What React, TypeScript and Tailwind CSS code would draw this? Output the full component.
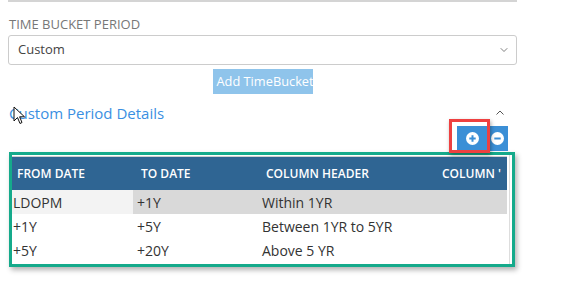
import { ChevronDown } from "lucide-react";

const rows = [
  { from: "LDOPM", to: "+1Y", header: "Within 1YR", selected: true },
  { from: "+1Y", to: "+5Y", header: "Between 1YR to 5YR", selected: false },
  { from: "+5Y", to: "+20Y", header: "Above 5 YR", selected: false },
];

const App = () => {
  return (
    <div className="relative w-[567px] h-[293px] overflow-hidden bg-white font-['Open_Sans',sans-serif] text-[#333]">
      {/* previous field edge */}
      <div className="ml-2 w-[509px] h-[2px] bg-[#d4d4d4]" />

      <div className="ml-2 w-[509px] pt-[13px]">
        <div className="pl-[1px] text-[13px] leading-[18px] text-[#777]">TIME BUCKET PERIOD</div>

        <div className="mt-[2px] flex h-[30px] items-center justify-between rounded-[3px] border border-[#ccc] pl-[9px] pr-[6px]">
          <span className="text-[13px] text-[#444]">Custom</span>
          <ChevronDown size={12} strokeWidth={1.5} className="text-[#555]" />
        </div>

        <div className="mt-[4px] flex justify-center">
          <button className="h-[25px] w-[100px] overflow-hidden whitespace-nowrap bg-[#8fc4eb] pl-[4px] text-left text-[12.8px] text-white">
            Add TimeBucket
          </button>
        </div>

        {/* Section heading */}
        <div className="mt-[9px] flex items-start justify-between pl-[1px] pr-[13px]">
          <span className="text-[15px] leading-[20px] text-[#3a8fe2]">Custom Period Details</span>
          <svg width="8" height="5" viewBox="0 0 8 5" className="mt-[7px]">
            <path d="M0.5 4.5 L4 1 L7.5 4.5" fill="none" stroke="#555" strokeWidth="1" />
          </svg>
        </div>

        {/* add / remove */}
        <div className="mt-[3px] flex justify-end pr-[9px]">
          <button className="flex h-[25px] w-[30px] items-center justify-center bg-[#3b8fd6]">
            <svg width="13" height="13" viewBox="0 0 13 13">
              <circle cx="6.5" cy="6.5" r="6.5" fill="white" />
              <path d="M6.5 3.3 V9.7 M3.3 6.5 H9.7" stroke="#3b8fd6" strokeWidth="2" />
            </svg>
          </button>
          <button className="flex h-[25px] w-[21px] items-center justify-center bg-[#3b8fd6]">
            <svg width="13" height="13" viewBox="0 0 13 13">
              <circle cx="6.5" cy="6.5" r="6.5" fill="white" />
              <path d="M3.3 6.5 H9.7" stroke="#3b8fd6" strokeWidth="2" />
            </svg>
          </button>
        </div>
      </div>

      {/* Table with highlight frame */}
      <div className="ml-[9px] mt-[1px] w-[506px] border-[3px] border-[#15aa8b] shadow-[2px_3px_5px_rgba(0,0,0,0.3)]">
        <div className="flex">
          <div className="w-[495px] pt-[1px] pb-[1px]">
            <div className="h-[1px] bg-[#cfcfcf]" />
            <div className="flex h-[33px] items-center overflow-hidden whitespace-nowrap bg-[#2f6593] text-[12px] font-semibold text-white">
              <div className="w-[121px] pl-[5px]">FROM DATE</div>
              <div className="w-[125px] pl-[8px]">TO DATE</div>
              <div className="w-[176px] pl-[8px]">COLUMN HEADER</div>
              <div className="w-[69px] overflow-hidden pl-[8px]">COLUMN '</div>
            </div>
            {rows.map((r) => (
              <div
                key={r.from}
                className={`flex h-[24px] items-center text-[14px] ${r.selected ? "bg-[#d9d9d9]" : "bg-white"}`}
              >
                <div className={`flex h-full w-[121px] items-center pl-[1px] ${r.selected ? "bg-[#f3f3f3]" : ""}`}>
                  {r.from}
                </div>
                <div className="w-[125px] pl-[4px]">{r.to}</div>
                <div className="w-[176px] pl-[4px]">{r.header}</div>
              </div>
            ))}
            <div className="h-[1px]" />
          </div>
          <div className="ml-[2px] w-[1px] bg-[#ddd]" />
        </div>
      </div>

      {/* red highlight on add button */}
      <div className="absolute left-[449px] top-[119px] h-[34px] w-[41px] border-[3px] border-[#ee4040] shadow-[1px_2px_4px_rgba(0,0,0,0.35)]" />

      {/* mouse cursor */}
      <svg className="absolute left-[13px] top-[106px]" width="13" height="19" viewBox="0 0 13 19">
        <path d="M1 1 V15 L4.5 11.5 L7 17.5 L9 16.5 L6.6 10.8 H11.5 Z" fill="white" stroke="#111" strokeWidth="1" strokeLinejoin="round" />
      </svg>
    </div>
  );
};

export default App;
